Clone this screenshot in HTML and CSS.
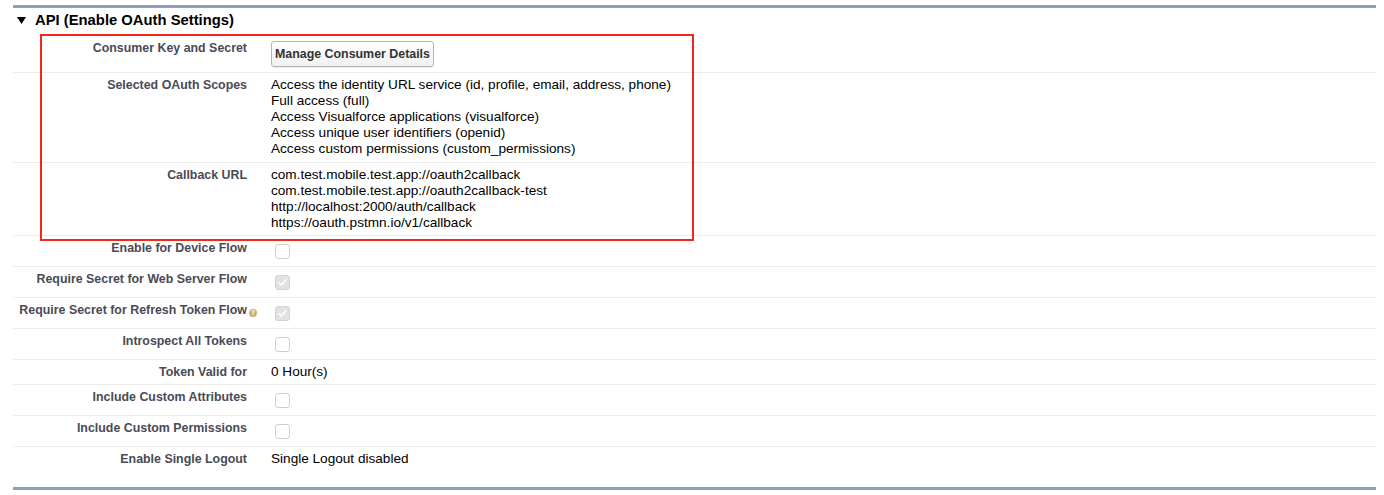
FILE: index.html
```html
<!DOCTYPE html>
<html lang="en">
<head>
<meta charset="utf-8">
<title>API (Enable OAuth Settings)</title>
<link rel="stylesheet" href="styles.css">
</head>
<body>
<div class="section">
  <h3 class="section-title"><svg class="twisty" viewBox="0 0 9 7" width="9" height="7"><polygon points="0,0 9,0 4.5,7" fill="#000"/></svg>API (Enable OAuth Settings)</h3>
  <div class="detail-list">
    <div class="row">
      <div class="label">Consumer Key and Secret</div>
      <div class="value"><button class="btn" type="button">Manage Consumer Details</button></div>
    </div>
    <div class="row row-tall">
      <div class="label">Selected OAuth Scopes</div>
      <div class="value">
        <div>Access the identity URL service (id, profile, email, address, phone)</div>
        <div>Full access (full)</div>
        <div>Access Visualforce applications (visualforce)</div>
        <div>Access unique user identifiers (openid)</div>
        <div>Access custom permissions (custom_permissions)</div>
      </div>
    </div>
    <div class="row">
      <div class="label">Callback URL</div>
      <div class="value">
        <div>com.test.mobile.test.app://oauth2callback</div>
        <div>com.test.mobile.test.app://oauth2callback-test</div>
        <div>http://localhost:2000/auth/callback</div>
        <div>https://oauth.pstmn.io/v1/callback</div>
      </div>
    </div>
    <div class="row">
      <div class="label">Enable for Device Flow</div>
      <div class="value"><span class="cb"></span></div>
    </div>
    <div class="row">
      <div class="label">Require Secret for Web Server Flow</div>
      <div class="value"><span class="cb cb-checked"><svg viewBox="0 0 15 15" width="13" height="13"><path d="M3.5 7.8 L6.2 10.4 L11.5 4.2" fill="none" stroke="#fff" stroke-width="1.8" stroke-linecap="round" stroke-linejoin="round"/></svg></span></div>
    </div>
    <div class="row">
      <div class="label">Require Secret for Refresh Token Flow<span class="help">?</span></div>
      <div class="value"><span class="cb cb-checked"><svg viewBox="0 0 15 15" width="13" height="13"><path d="M3.5 7.8 L6.2 10.4 L11.5 4.2" fill="none" stroke="#fff" stroke-width="1.8" stroke-linecap="round" stroke-linejoin="round"/></svg></span></div>
    </div>
    <div class="row">
      <div class="label">Introspect All Tokens</div>
      <div class="value"><span class="cb"></span></div>
    </div>
    <div class="row">
      <div class="label">Token Valid for</div>
      <div class="value">0 Hour(s)</div>
    </div>
    <div class="row">
      <div class="label">Include Custom Attributes</div>
      <div class="value"><span class="cb"></span></div>
    </div>
    <div class="row">
      <div class="label">Include Custom Permissions</div>
      <div class="value"><span class="cb"></span></div>
    </div>
    <div class="row row-last">
      <div class="label">Enable Single Logout</div>
      <div class="value">Single Logout disabled</div>
    </div>
  </div>
  <div class="highlight"></div>
</div>
</body>
</html>
```
FILE: styles.css
```css
html, body {
  margin: 0;
  padding: 0;
  background: #fff;
}

body {
  font-family: "Liberation Sans", Arial, sans-serif;
  color: #000;
}

.section {
  position: relative;
  margin: 5px 0 0 13px;
  width: 1363px;
  border-top: 3px solid #8e9dc0;
  border-bottom: 3px solid #8e9dc0;
  padding-bottom: 16px;
}

.section-title {
  margin: 0;
  padding: 4px 0 8px 4px;
  font-size: 14.8px;
  line-height: 16px;
  font-weight: bold;
  color: #000;
  display: flex;
  align-items: center;
}

.twisty {
  display: block;
  margin-right: 9px;
}

.row {
  display: grid;
  grid-template-columns: 234px 1fr;
  column-gap: 24px;
  padding: 4px 0 4px;
  border-bottom: 1px solid #ececec;
}

.row-tall {
  padding-bottom: 5px;
}

.row-last {
  border-bottom: none;
}

.label {
  text-align: right;
  font-size: 12.4px;
  line-height: 16px;
  font-weight: bold;
  color: #4a4a56;
  white-space: nowrap;
}

.value {
  font-size: 13.6px;
  line-height: 16px;
  color: #000;
}

.btn {
  display: block;
  margin: 1px 0 1px;
  height: 26px;
  padding: 0 3px;
  font-family: "Liberation Sans", Arial, sans-serif;
  font-size: 12.4px;
  font-weight: bold;
  color: #333;
  background: linear-gradient(#ffffff, #f1f1f1);
  border: 1px solid #b5b5b5;
  border-radius: 3px;
  box-shadow: 0 1px 0 rgba(0, 0, 0, 0.08);
}

.cb {
  display: flex;
  align-items: center;
  justify-content: center;
  box-sizing: border-box;
  width: 15px;
  height: 15px;
  margin: 4px 0 3px 4px;
  border: 1px solid #cfcfcf;
  border-radius: 3px;
  background: #fff;
}

.cb-checked {
  background: #e2e2e2;
  border-color: #d2d2d2;
}

.cb svg {
  display: block;
}

.help {
  display: inline-block;
  width: 8px;
  height: 8px;
  margin-left: 2px;
  margin-right: -10px;
  border-radius: 50%;
  background: #d2ad6e;
  color: #fff;
  font-size: 7px;
  line-height: 8px;
  text-align: center;
  vertical-align: -1px;
}

.highlight {
  position: absolute;
  left: 27px;
  top: 26px;
  width: 654px;
  height: 207px;
  box-sizing: border-box;
  border: 2px solid #f0291e;
  pointer-events: none;
}
```
